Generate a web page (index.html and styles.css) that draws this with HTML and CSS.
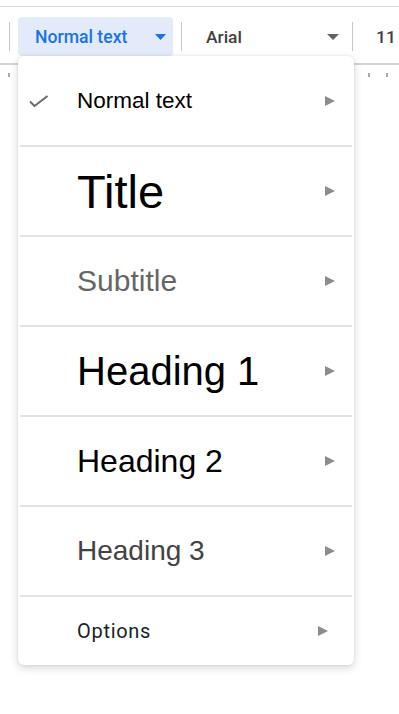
FILE: index.html
```html
<!DOCTYPE html>
<html>
<head>
<meta charset="utf-8">
<link rel="stylesheet" href="styles.css">
</head>
<body>
<div class="topline"></div>
<div class="toolbar">
  <span class="sep"></span>
  <div class="btn active">
    <span class="btn-label">Normal text</span>
    <svg class="caret" width="11" height="6" viewBox="0 0 11 6"><path d="M0 0h11L5.5 6z" fill="#1a73e8"/></svg>
  </div>
  <span class="sep"></span>
  <div class="btn font">
    <span class="btn-label">Arial</span>
    <svg class="caret" width="12" height="6" viewBox="0 0 12 6"><path d="M0 0h12L6 6z" fill="#5f6368"/></svg>
  </div>
  <span class="sep"></span>
  <div class="size">11</div>
</div>
<div class="ruler">
  <span class="tick t1"></span>
  <span class="tick t2"></span>
  <span class="tick t3"></span>
</div>

<div class="menu">
  <div class="item first">
    <span class="gutter"><svg width="20" height="12" viewBox="0 0 20 12"><path d="M1 6.5l4.5 4.5L18.5 1" fill="none" stroke="#6b6b6b" stroke-width="2"/></svg></span>
    <span class="label normal">Normal text</span>
    <span class="arrow"></span>
  </div>
  <div class="rule"></div>
  <div class="item">
    <span class="gutter"></span>
    <span class="label title">Title</span>
    <span class="arrow"></span>
  </div>
  <div class="rule"></div>
  <div class="item">
    <span class="gutter"></span>
    <span class="label subtitle">Subtitle</span>
    <span class="arrow"></span>
  </div>
  <div class="rule"></div>
  <div class="item">
    <span class="gutter"></span>
    <span class="label h1">Heading 1</span>
    <span class="arrow"></span>
  </div>
  <div class="rule"></div>
  <div class="item">
    <span class="gutter"></span>
    <span class="label h2">Heading 2</span>
    <span class="arrow"></span>
  </div>
  <div class="rule"></div>
  <div class="item">
    <span class="gutter"></span>
    <span class="label h3">Heading 3</span>
    <span class="arrow"></span>
  </div>
  <div class="rule"></div>
  <div class="item options">
    <span class="gutter"></span>
    <span class="label opt">Options</span>
    <span class="arrow"></span>
  </div>
</div>
</body>
</html>
```

FILE: styles.css
```css
html, body {
  margin: 0;
  padding: 0;
  background: #ffffff;
}
body {
  width: 399px;
  height: 714px;
  overflow: hidden;
  position: relative;
  font-family: Roboto, "Liberation Sans", sans-serif;
}
.topline {
  height: 6px;
  border-bottom: 1px solid #dadce0;
}
.toolbar {
  margin-top: 10px;
  height: 39px;
  display: flex;
  align-items: center;
  padding-left: 9px;
}
.sep {
  width: 1px;
  height: 29px;
  background: #c7c7c7;
  flex: none;
}
.btn {
  height: 39px;
  display: flex;
  align-items: center;
  box-sizing: border-box;
  flex: none;
}
.btn.active {
  margin-left: 8px;
  margin-right: 8px;
  width: 155px;
  background: #e3ebfb;
  border-radius: 4px;
  padding-left: 17px;
  padding-right: 7px;
}
.btn.active .btn-label {
  color: #1a73e8;
  font-weight: 500;
  font-size: 17.6px;
}
.btn .caret {
  margin-left: auto;
}
.btn.font {
  width: 170px;
  padding-left: 24px;
  padding-right: 13px;
}
.btn.font .btn-label {
  color: #3c4043;
  font-weight: 500;
  font-size: 17.4px;
}
.size {
  margin-left: 23px;
  color: #3c4043;
  font-weight: 500;
  font-size: 17.4px;
}
.ruler {
  position: relative;
  margin-top: 7px;
  height: 14px;
  border-top: 2px solid #d2d2d8;
}
.tick {
  position: absolute;
  top: 8px;
  width: 2px;
  height: 4px;
  background: #a9a9bc;
}
.t1 { left: 8px; }
.t2 { left: 368px; }
.t3 { left: 386px; }

.menu {
  position: absolute;
  left: 18px;
  top: 56px;
  width: 336px;
  height: 609px;
  background: #ffffff;
  border-radius: 6px;
  box-shadow: 0 3px 8px rgba(0, 0, 0, 0.16), 0 0 3px rgba(0, 0, 0, 0.08);
  display: flex;
  flex-direction: column;
}
.item {
  height: 88px;
  display: flex;
  align-items: center;
  padding-right: 19px;
  flex: none;
}
.item.first {
  height: 89px;
}
.item.options {
  height: 68px;
  padding-right: 26px;
}
.gutter {
  width: 59px;
  flex: none;
  display: flex;
  align-items: center;
  padding-left: 11px;
  box-sizing: border-box;
}
.rule {
  height: 2px;
  margin: 0 2px;
  background: #e3e3e3;
  flex: none;
}
.label {
  font-family: "Liberation Sans", Arial, sans-serif;
  color: #000000;
  white-space: nowrap;
}
.normal { font-size: 22.5px; }
.title { font-size: 47px; }
.subtitle { font-size: 30px; color: #666666; }
.h1 { font-size: 40px; }
.h2 { font-size: 32px; }
.h3 { font-size: 28px; color: #434343; }
.opt {
  font-family: Roboto, "Liberation Sans", sans-serif;
  font-size: 20px;
  color: #202124;
  letter-spacing: 0.7px;
}
.arrow {
  margin-left: auto;
  width: 0;
  height: 0;
  border-top: 5px solid transparent;
  border-bottom: 5px solid transparent;
  border-left: 10px solid #8c8c8c;
}
```
